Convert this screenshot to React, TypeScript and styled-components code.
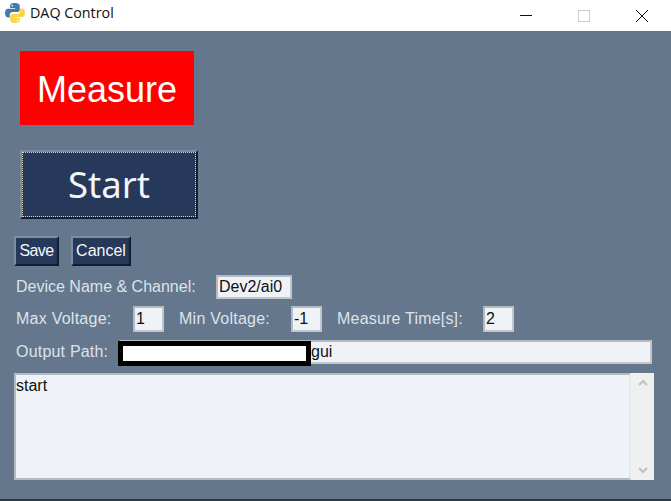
import { FC } from 'react'
import styled, { createGlobalStyle } from 'styled-components'

const GlobalStyle = createGlobalStyle`
  html, body {
    margin: 0;
    padding: 0;
    width: 671px;
    height: 501px;
    overflow: hidden;
    background: #64778d;
  }
`

const Window = styled.div`
  display: flex;
  flex-direction: column;
  width: 671px;
  height: 501px;
  font-family: 'Liberation Sans', Arial, sans-serif;
`

const TitleBar = styled.div`
  display: flex;
  align-items: center;
  flex: none;
  height: 31px;
  padding-left: 5px;
  background: #ffffff;
`

const AppIcon = styled.svg`
  display: block;
  width: 20px;
  height: 20px;
  margin-top: -5px;
`

const TitleText = styled.span`
  margin-left: 5px;
  margin-top: -7px;
  font-family: 'Open Sans', 'Noto Sans', sans-serif;
  font-size: 14.3px;
  color: #111111;
`

const WindowButtons = styled.div`
  display: flex;
  margin-left: auto;
`

const WindowButton = styled.div`
  display: flex;
  align-items: center;
  justify-content: center;
  width: 58px;
  height: 24px;
`

const Panel = styled.div`
  display: flex;
  flex: 1;
  flex-direction: column;
  align-items: flex-start;
  padding: 20px 0 0 14px;
  background: #64778d;
`

const MeasureBadge = styled.div`
  display: flex;
  align-items: center;
  justify-content: center;
  box-sizing: border-box;
  width: 174px;
  height: 74px;
  margin-left: 6px;
  padding-top: 3px;
  background: #ff0000;
  color: #ffffff;
  font-size: 36px;
`

const ActionButton = styled.button<{ $big?: boolean; $ls?: number }>`
  position: relative;
  box-sizing: border-box;
  padding: 0;
  border: 2px solid;
  border-color: #7d8ca0 #141d30 #141d30 #7d8ca0;
  background: #27395b;
  color: #f4f6fa;
  font-family: ${(p) => (p.$big ? "'Noto Sans', sans-serif" : "'Liberation Sans', sans-serif")};
  font-size: ${(p) => (p.$big ? '36.5px' : '16px')};
  letter-spacing: ${(p) => p.$ls ?? 0}px;
  line-height: 1;
`

const StartButton = styled(ActionButton)`
  width: 178px;
  height: 69px;
  margin: 25px 0 17px 6px;
  outline: 1px dotted #d9d6bd;
  outline-offset: -3px;
`

const ButtonRow = styled.div`
  display: flex;
  gap: 12px;
  margin-bottom: 9px;
`

const SmallButton = styled(ActionButton)<{ $w: number }>`
  width: ${(p) => p.$w}px;
  height: 30px;
`

const FieldRow = styled.div<{ $h: number; $mb: number }>`
  display: flex;
  align-items: center;
  height: ${(p) => p.$h}px;
  margin-bottom: ${(p) => p.$mb}px;
  padding-left: 2px;
`

const FieldLabel = styled.span<{ $w: number; $ml?: number; $ls?: number }>`
  flex: none;
  width: ${(p) => p.$w}px;
  margin-left: ${(p) => p.$ml ?? 0}px;
  color: #dde3ea;
  font-size: 16px;
  letter-spacing: ${(p) => p.$ls ?? 0}px;
  white-space: nowrap;
`

const FieldInput = styled.input<{ $w: number; $indent?: number }>`
  box-sizing: border-box;
  flex: none;
  width: ${(p) => p.$w}px;
  height: 100%;
  padding: 0 0 0 ${(p) => p.$indent ?? 1}px;
  border: 2px solid;
  border-color: #b4bac2 #c2c6cb #c2c6cb #b4bac2;
  border-radius: 0;
  outline: none;
  background: #eff3f8;
  color: #101010;
  font-family: 'Liberation Sans', sans-serif;
  font-size: 16px;
`

const OutputRow = styled(FieldRow)`
  position: relative;
`

const RedactBox = styled.div`
  position: absolute;
  top: 1px;
  left: 104px;
  box-sizing: border-box;
  width: 193px;
  height: 25px;
  border: 5px solid #000000;
  background: #ffffff;
`

const LogArea = styled.div`
  display: flex;
  width: 640px;
  height: 107px;
`

const LogText = styled.div`
  box-sizing: border-box;
  flex: 1;
  padding: 2px 0 0 0;
  border: 2px solid;
  border-color: #b4bac2 #e4e7ec #b4bac2 #b4bac2;
  background: #eff3f8;
  color: #101010;
  font-size: 16px;
`

const ScrollBar = styled.div`
  display: flex;
  flex: none;
  flex-direction: column;
  align-items: center;
  justify-content: space-between;
  box-sizing: border-box;
  width: 23px;
  padding: 6px 0;
  background: #f0f0f0;
`

const Chevron = styled.svg`
  display: block;
  width: 10px;
  height: 8px;
`

const BottomEdge = styled.div`
  flex: none;
  height: 2px;
  background: #2b3a40;
`

const pythonHalf =
  'M11.9 0.1C6.8 0.1 6.2 2 6.2 3.6V6H12.2V6.9H3.6C1.4 6.9 0 9 0 12C0 15 1.4 17.3 3.4 17.3H5.7V14.4C5.7 12.3 7.3 10.9 9.2 10.9H14.8C16.5 10.9 17.7 9.6 17.7 8V3.4C17.7 1.4 15.5 0.1 11.9 0.1Z'

const PythonIcon: FC = () => (
  <AppIcon viewBox="0 0 24 24">
    <path d={pythonHalf} fill="#3f7cad" />
    <circle cx="8.8" cy="3.1" r="1" fill="#ffffff" />
    <g transform="rotate(180 12 12)">
      <path d={pythonHalf} fill="#fdd445" />
      <circle cx="8.8" cy="3.1" r="1" fill="#ffffff" />
    </g>
  </AppIcon>
)

const App: FC = () => (
  <Window>
    <GlobalStyle />
    <TitleBar>
      <PythonIcon />
      <TitleText>DAQ Control</TitleText>
      <WindowButtons>
        <WindowButton>
          <svg width="12" height="12" viewBox="0 0 12 12">
            <path d="M0 5.5H12" stroke="#111111" strokeWidth="1" />
          </svg>
        </WindowButton>
        <WindowButton>
          <svg width="12" height="12" viewBox="0 0 12 12">
            <rect x="0.5" y="0.5" width="11" height="11" fill="none" stroke="#cccccc" />
          </svg>
        </WindowButton>
        <WindowButton>
          <svg width="12" height="12" viewBox="0 0 12 12">
            <path d="M0 0L12 12M12 0L0 12" stroke="#111111" strokeWidth="1" />
          </svg>
        </WindowButton>
      </WindowButtons>
    </TitleBar>
    <Panel>
      <MeasureBadge>Measure</MeasureBadge>
      <StartButton $big>Start</StartButton>
      <ButtonRow>
        <SmallButton $w={45} $ls={-0.6}>Save</SmallButton>
        <SmallButton $w={60}>Cancel</SmallButton>
      </ButtonRow>
      <FieldRow $h={24} $mb={7}>
        <FieldLabel $w={200}>Device Name &amp; Channel:</FieldLabel>
        <FieldInput $w={76} defaultValue="Dev2/ai0" readOnly />
      </FieldRow>
      <FieldRow $h={26} $mb={8}>
        <FieldLabel $w={117} $ls={0.25}>Max Voltage:</FieldLabel>
        <FieldInput $w={31} defaultValue="1" readOnly />
        <FieldLabel $w={112} $ml={15} $ls={0.25}>Min Voltage:</FieldLabel>
        <FieldInput $w={31} defaultValue="-1" readOnly />
        <FieldLabel $w={146} $ml={15} $ls={0.2}>Measure Time[s]:</FieldLabel>
        <FieldInput $w={31} defaultValue="2" readOnly />
      </FieldRow>
      <OutputRow $h={24} $mb={9}>
        <FieldLabel $w={104} $ls={0.2}>Output Path:</FieldLabel>
        <FieldInput $w={532} $indent={189} defaultValue="gui" readOnly />
        <RedactBox />
      </OutputRow>
      <LogArea>
        <LogText>start</LogText>
        <ScrollBar>
          <Chevron viewBox="0 0 10 8">
            <path d="M1 6L5 2L9 6" fill="none" stroke="#c2c2c2" strokeWidth="2" />
          </Chevron>
          <Chevron viewBox="0 0 10 8">
            <path d="M1 2L5 6L9 2" fill="none" stroke="#c2c2c2" strokeWidth="2" />
          </Chevron>
        </ScrollBar>
      </LogArea>
    </Panel>
    <BottomEdge />
  </Window>
)

export default App
